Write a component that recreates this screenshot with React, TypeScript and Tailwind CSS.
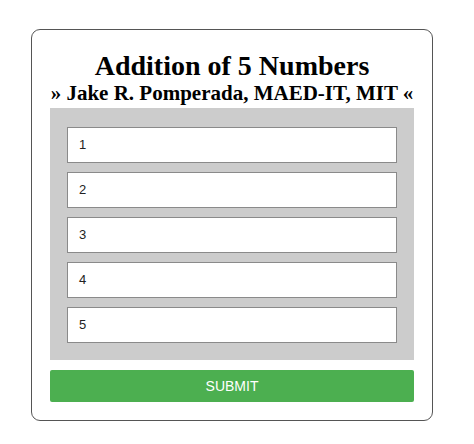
import React from "react";

export default function App() {
  const values = ["1", "2", "3", "4", "5"];
  return (
    <div className="w-[474px] h-[444px] bg-white overflow-hidden">
      <div className="ml-[31px] mt-[29px] w-[402px] h-[392px] border border-[#555] rounded-[9px] px-[18px] pt-[22px] bg-white">
        <div className="text-center text-[28px] leading-[28px] font-bold text-black whitespace-nowrap font-['Liberation_Serif','Times_New_Roman',serif]">
          Addition of 5 Numbers
        </div>
        <div className="mt-[3px] text-center text-[21px] leading-[21px] font-bold text-black whitespace-nowrap font-['Liberation_Serif','Times_New_Roman',serif]">
          » Jake R. Pomperada, MAED-IT, MIT «
        </div>
        <div className="mt-[4px] h-[252px] bg-[#cccccc] px-[17px] pt-[19px] flex flex-col gap-[9px]">
          {values.map((v) => (
            <div
              key={v}
              className="h-[36px] bg-white border border-[#8a8a8a] flex items-center pl-[11px] text-[13px] text-[#222] font-['Liberation_Sans',Arial,sans-serif]"
            >
              {v}
            </div>
          ))}
        </div>
        <div className="mt-[10px] h-[32px] bg-[#4caf50] rounded-[2px] flex items-center justify-center text-white text-[14px] font-['Liberation_Sans',Arial,sans-serif]">
          SUBMIT
        </div>
      </div>
    </div>
  );
}
